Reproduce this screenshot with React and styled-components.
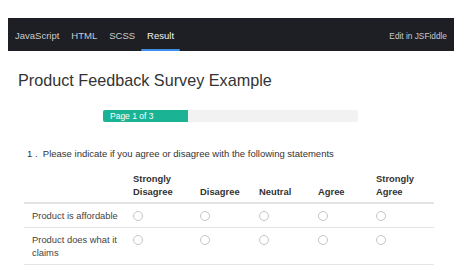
import React from 'react'
import styled, { createGlobalStyle } from 'styled-components'

const Global = createGlobalStyle`
    html, body {
        margin: 0;
        padding: 0;
        background: #fff;
        font-family: "Liberation Sans", Arial, sans-serif;
        color: #333;
    }
`

const Page = styled.div`
    width: 474px;
    height: 270px;
    overflow: hidden;
    padding: 18px 20px 0 8px;
    box-sizing: border-box;
`

const Toolbar = styled.div`
    height: 33px;
    background: #1d1f24;
    display: flex;
    align-items: stretch;
    justify-content: space-between;
    padding: 0 7px 0 1px;
`

const Tabs = styled.div`
    display: flex;
`

const Tab = styled.a`
    display: flex;
    align-items: center;
    padding: 2px 6px 0;
    font-size: 9.5px;
    color: ${props => props.active ? '#f2f2f2' : '#c9cbd0'};
    text-decoration: none;
    position: relative;

    ${props => props.active ? `
        &::after {
            content: '';
            position: absolute;
            left: 0;
            right: 0;
            bottom: 0;
            height: 2px;
            background: #3b8fe8;
            border-radius: 1px;
        }
    ` : ''}
`

const EditLink = styled.a`
    display: flex;
    align-items: center;
    padding-top: 2px;
    font-size: 8.3px;
    color: #c8cad0;
`

const Body = styled.div`
    padding: 0 0 0 10px;
`

const Title = styled.h1`
    margin: 20px 0 0;
    font-size: 16.2px;
    font-weight: 400;
    color: #333;
`

const Progress = styled.div`
    margin: 20px 0 0 85px;
    width: 255px;
    height: 12px;
    background: #f2f2f2;
    border-radius: 2px;
    overflow: hidden;
`

const ProgressFill = styled.div`
    height: 100%;
    background: #1ab394;
    color: #fff;
    font-size: 8.5px;
    line-height: 12px;
    padding-left: 7px;
    box-sizing: border-box;
`

const Question = styled.div`
    margin: 26px 0 0 9px;
    font-size: 9.5px;
    line-height: 12px;
    color: #333;
`

const Table = styled.table`
    margin: 7px 0 0 6px;
    width: 410px;
    border-collapse: collapse;
    font-size: 9.4px;
    table-layout: fixed;
    color: #333;

    th {
        text-align: left;
        font-weight: 700;
        vertical-align: bottom;
        padding: 5px 6px 4px;
        line-height: 13px;
        border-bottom: 2px solid #e4e4e4;
    }

    td {
        padding: 5px 6px 5px;
        line-height: 13px;
        vertical-align: top;
        border-bottom: 1px solid #e4e4e4;
    }

    td:first-child {
        padding-left: 8px;
        color: #444;
    }
`

const Radio = styled.span`
    display: block;
    width: 8px;
    height: 8px;
    border: 1px solid #c6c6c6;
    border-radius: 50%;
    margin-top: 2px;
`

const columns = [['Strongly', 'Disagree'], ['Disagree'], ['Neutral'], ['Agree'], ['Strongly', 'Agree']]
const widths = [103, 67, 59, 59, 58, 64]
const rows = [['Product is affordable'], ['Product does what it', 'claims']]

export default function App() {
    return (
        <Page>
            <Global />
            <Toolbar>
                <Tabs>
                    <Tab>JavaScript</Tab>
                    <Tab>HTML</Tab>
                    <Tab>SCSS</Tab>
                    <Tab active>Result</Tab>
                </Tabs>
                <EditLink>Edit in JSFiddle</EditLink>
            </Toolbar>
            <Body>
                <Title>Product Feedback Survey Example</Title>
                <Progress>
                    <ProgressFill style={{ width: `${100 / 3}%` }}>Page 1 of 3</ProgressFill>
                </Progress>
                <Question>1 .&nbsp; Please indicate if you agree or disagree with the following statements</Question>
                <Table>
                    <colgroup>
                        {widths.map((w, i) => <col key={i} style={{ width: w }} />)}
                    </colgroup>
                    <thead>
                        <tr>
                            <th />
                            {columns.map((c, i) => (
                                <th key={i}>{c.map((l, j) => <div key={j}>{l}</div>)}</th>
                            ))}
                        </tr>
                    </thead>
                    <tbody>
                        {rows.map((r, i) => (
                            <tr key={i}>
                                <td>{r.map((l, j) => <div key={j}>{l}</div>)}</td>
                                {columns.map((c, k) => <td key={k}><Radio /></td>)}
                            </tr>
                        ))}
                    </tbody>
                </Table>
            </Body>
        </Page>
    )
}
